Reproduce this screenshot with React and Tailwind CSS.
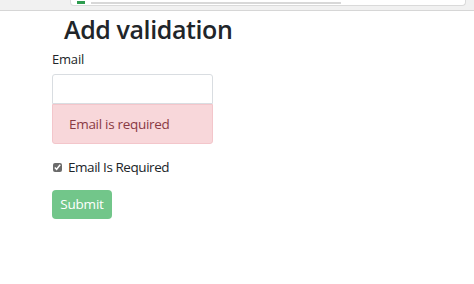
export default function App() {
    return (
        <div className="w-[474px] h-[284px] bg-white overflow-hidden font-['Open_Sans',sans-serif] text-[#212529]">
            {/* Browser chrome remnant */}
            <div className="h-[11px] bg-[#f1f1f1] border-b border-[#d6d6d6] flex">
                <div className="ml-[70px] mr-[8px] flex-1 h-[6px] bg-white border-x border-b border-[#dadada] rounded-b-sm flex items-end pl-[6px]">
                    <span className="w-[8px] h-[3px] bg-[#2e9c4f] mb-[1px]" />
                    <span className="ml-[6px] h-[2px] w-[250px] bg-[#d8d8d8] mb-[1px]" />
                </div>
            </div>

            {/* Page */}
            <div className="pl-[52px]">
                <h1 className="pl-[12px] mt-[2px] text-[25px] leading-[32px] font-semibold tracking-[-0.4px]">Add validation</h1>

                <label className="block mt-[5px] text-[13px] leading-[18px] tracking-[-0.2px]">Email</label>

                <input
                    type="text"
                    className="mt-[6px] block w-[161px] h-[30px] border border-[#d9dde1] rounded-t-[3px] outline-none"
                />
                <div className="w-[161px] h-[40px] bg-[#f8d7da] border border-[#f3c6cb] rounded-b-[3px] pl-[16px] flex items-center text-[13.5px] tracking-[-0.3px] text-[#8a3a44]">
                    Email is required
                </div>

                <div className="mt-[14px] flex items-center h-[18px]">
                    <input type="checkbox" defaultChecked className="w-[9px] h-[9px] ml-[1px] accent-[#6b6b6b]" />
                    <span className="ml-[6px] text-[13.5px] leading-[18px] tracking-[-0.45px]">Email Is Required</span>
                </div>

                <button className="mt-[14px] w-[60px] h-[29px] bg-[#72c68a] rounded-[4px] text-white text-[13.5px] font-medium tracking-[-0.2px]">
                    Submit
                </button>
            </div>
        </div>
    );
}
